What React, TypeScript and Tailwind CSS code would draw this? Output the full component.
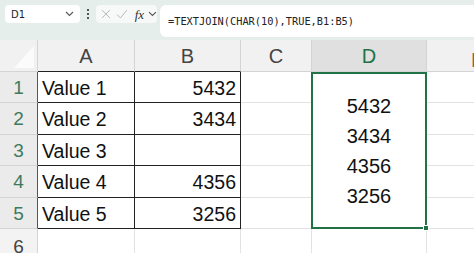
import React from "react";

const GREEN = "#217346";

const rows = [
  { n: "1", a: "Value 1", b: "5432" },
  { n: "2", a: "Value 2", b: "3434" },
  { n: "3", a: "Value 3", b: "" },
  { n: "4", a: "Value 4", b: "4356" },
  { n: "5", a: "Value 5", b: "3256" },
];

function Chevron({ className = "" }: { className?: string }) {
  return (
    <svg width="9" height="6" viewBox="0 0 9 6" className={className}>
      <path d="M1 1 L4.5 4.5 L8 1" fill="none" stroke="#555" strokeWidth="1.1" />
    </svg>
  );
}

export default function App() {
  return (
    <div
      className="w-[474px] h-[253px] overflow-hidden bg-white"
      style={{ fontFamily: '"Liberation Sans", Arial, sans-serif' }}
    >
      {/* Top bar */}
      <div className="h-[40px] bg-[#e6eeeb] flex items-start pt-[5px] pl-[5px] gap-0">
        <div className="w-[75px] h-[18px] bg-white rounded-[4px] flex items-center justify-between pl-[6px] pr-[6px]">
          <span className="text-[10px] text-[#222]" style={{ fontFamily: '"DejaVu Sans", sans-serif' }}>D1</span>
          <Chevron />
        </div>
        <div className="w-[16px] h-[18px] flex flex-col items-center justify-center gap-[2px]">
          <div className="w-[2px] h-[2px] bg-[#555]" />
          <div className="w-[2px] h-[2px] bg-[#555]" />
          <div className="w-[2px] h-[2px] bg-[#555]" />
        </div>
        <div className="w-[61px] h-[18px] bg-[#f6f9f8] rounded-[4px] flex items-center pl-[4px] gap-[3px]">
          <svg width="12" height="12" viewBox="0 0 12 12">
            <path d="M2 2 L10 10 M10 2 L2 10" stroke="#b8b8b8" strokeWidth="1" fill="none" />
          </svg>
          <svg width="14" height="12" viewBox="0 0 14 12">
            <path d="M2 6.5 L5.5 10 L12 2" stroke="#b8b8b8" strokeWidth="1" fill="none" />
          </svg>
          <span
            className="text-[13px] italic text-[#333] leading-none ml-[3px]"
            style={{ fontFamily: '"Liberation Serif", "Times New Roman", serif' }}
          >
            fx
          </span>
          <Chevron className="ml-[1px]" />
        </div>
        <div className="ml-[3px] flex-1 h-[32px] bg-white rounded-l-[6px] pl-[8px] pt-[3px]">
          <span
            className="text-[10.3px] text-[#222]"
            style={{ fontFamily: '"DejaVu Sans Mono", "Liberation Mono", monospace' }}
          >
            =TEXTJOIN(CHAR(10),TRUE,B1:B5)
          </span>
        </div>
      </div>

      {/* Grid */}
      <div
        className="grid"
        style={{
          gridTemplateColumns: "38px 97px 106px 71px 115px 1fr",
          gridTemplateRows: "32px 31px 32px 31px 32px 31px 32px",
        }}
      >
        {/* Header row */}
        <div className="bg-[#f1f1f1] border-r border-b border-[#d4d4d4] relative">
          <svg width="38" height="32" viewBox="0 0 38 32" className="absolute left-0 top-0">
            <path d="M14 28 L34 6 L34 28 Z" fill="#fbfbfb" />
          </svg>
        </div>
        <div className="bg-[#f1f1f1] border-r border-[#d4d4d4] border-b border-b-[#222] flex items-center justify-center text-[20px] text-[#444]">
          A
        </div>
        <div className="bg-[#f1f1f1] border-r border-[#d4d4d4] border-b border-b-[#222] flex items-center justify-center text-[20px] text-[#444]">
          B
        </div>
        <div className="bg-[#f1f1f1] border-r border-b border-[#d4d4d4] flex items-center justify-center text-[20px] text-[#444]">
          C
        </div>
        <div className="bg-[#e0e0e0] border-r border-b border-[#d4d4d4] flex items-center justify-center text-[20px] text-[#217346]">
          D
        </div>
        <div className="bg-[#f1f1f1] border-b border-[#d4d4d4] overflow-hidden relative">
          <span className="absolute left-[44px] top-[5px] text-[20px] text-[#7a6a55]">E</span>
        </div>

        {/* Rows 1-5 */}
        {rows.map((r, i) => (
          <React.Fragment key={r.n}>
            <div
              className="bg-[#ebebeb] border-b border-b-[#d4d4d4] border-r border-r-[#217346] flex items-center justify-center text-[19px] text-[#3f7a5e] pt-[2px]"
              style={{ gridRow: i + 2, gridColumn: 1 }}
            >
              {r.n}
            </div>
            <div
              className="border-r border-b border-[#222] flex items-center pl-[4px] pt-[3px] text-[19.5px] text-[#111]"
              style={{ gridRow: i + 2, gridColumn: 2 }}
            >
              {r.a}
            </div>
            <div
              className="border-r border-b border-[#222] flex items-center justify-end pr-[4px] pt-[3px] text-[19.5px] text-[#111]"
              style={{ gridRow: i + 2, gridColumn: 3 }}
            >
              {r.b}
            </div>
            <div
              className="border-b border-[#e2e2e2]"
              style={{ gridRow: i + 2, gridColumn: 4 }}
            />
            <div
              className="border-b border-[#e2e2e2]"
              style={{ gridRow: i + 2, gridColumn: 6 }}
            />
          </React.Fragment>
        ))}

        {/* Merged D1:D5 */}
        <div
          className="relative -ml-px border-2 border-[#217346] flex flex-col items-center justify-center text-[20px] leading-[30px] text-[#111] bg-white"
          style={{ gridRow: "2 / span 5", gridColumn: 5 }}
        >
          <span>5432</span>
          <span>3434</span>
          <span>4356</span>
          <span>3256</span>
          <div
            className="absolute -right-[4px] -bottom-[4px] w-[6px] h-[6px] bg-[#217346] border border-white"
            style={{ borderColor: "#fff", backgroundColor: GREEN }}
          />
        </div>

        {/* Row 6 */}
        <div className="bg-[#f3f3f3] border-r border-[#d4d4d4] flex items-center justify-center text-[19px] text-[#444] pt-[4px]">
          6
        </div>
        <div className="border-r border-[#e2e2e2]" />
        <div className="border-r border-[#e2e2e2]" />
        <div className="border-r border-[#e2e2e2]" />
        <div className="border-r border-[#e2e2e2]" />
        <div />
      </div>
    </div>
  );
}
